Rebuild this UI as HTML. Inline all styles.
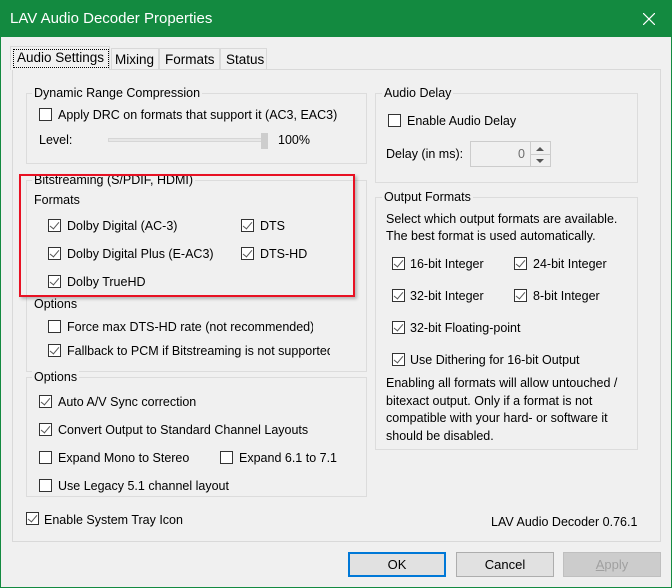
<!DOCTYPE html>
<html><head><meta charset="utf-8"><style>
*{box-sizing:border-box;margin:0;padding:0}
body{width:672px;height:588px;overflow:hidden;background:#f0f0f0;font-family:"Liberation Sans",sans-serif;font-size:12.5px;color:#000;position:relative}
.a{position:absolute;white-space:nowrap}
.win{position:absolute;left:0;top:0;width:672px;height:588px;border:1px solid #138a40}
.title{position:absolute;left:0;top:0;width:672px;height:37px;background:#138a40;color:#fff;font-size:15px}
.grp{position:absolute;border:1px solid #dcdcdc}
.lbl{position:absolute;background:#f0f0f0;padding:0 2px;line-height:14px}
.cb{position:absolute;width:13px;height:13px;border:1px solid #333;background:#fff}
.cb.c::after{content:"";position:absolute;left:3px;top:0px;width:4px;height:8px;border:solid #555;border-width:0 1.3px 1.3px 0;transform:rotate(40deg)}
.t{position:absolute;line-height:14px;white-space:nowrap}
.btn{position:absolute;height:25px;border:1px solid #adadad;background:#e1e1e1;text-align:center;line-height:23px;font-size:13px}
.tab{font-size:13.5px}
</style></head><body>
<div class="win"></div>
<div class="title"><span class="a" style="left:10px;top:10px">LAV Audio Decoder Properties</span>
<svg class="a" style="left:643px;top:13px" width="12" height="12"><path d="M0 0L12 12M12 0L0 12" stroke="#fff" stroke-width="1.2"/></svg></div>

<div class="a" style="left:12px;top:69px;width:649px;height:473px;border:1px solid #d9d9d9;background:#f0f0f0"></div>
<div class="a" style="left:10px;top:46px;width:100px;height:24px;border:1px solid #d9d9d9;border-bottom:none;background:#f0f0f0"></div>
<div class="a" style="left:13px;top:49px;width:96px;height:19px;border:1px dotted #000"></div>
<div class="t tab" style="left:17px;top:51px">Audio Settings</div>
<div class="a" style="left:111px;top:48px;width:48px;height:21px;border:1px solid #d9d9d9;border-bottom:none"></div>
<div class="t tab" style="left:115px;top:53px">Mixing</div>
<div class="a" style="left:159px;top:48px;width:61px;height:21px;border:1px solid #d9d9d9;border-bottom:none"></div>
<div class="t tab" style="left:165px;top:53px">Formats</div>
<div class="a" style="left:220px;top:48px;width:47px;height:21px;border:1px solid #d9d9d9;border-bottom:none"></div>
<div class="t tab" style="left:226px;top:53px">Status</div>

<!-- DRC -->
<div class="grp" style="left:26px;top:93px;width:341px;height:71px"></div>
<div class="lbl" style="left:32px;top:86px">Dynamic Range Compression</div>
<div class="cb" style="left:39px;top:108px"></div><div class="t" style="left:58px;top:108px">Apply DRC on formats that support it (AC3, EAC3)</div>
<div class="t" style="left:39px;top:133px">Level:</div>
<div class="a" style="left:108px;top:138px;width:160px;height:4px;background:#e7e7e7;border:1px solid #d6d6d6"></div>
<div class="a" style="left:261px;top:133px;width:7px;height:16px;background:#cdcdcd"></div>
<div class="t" style="left:278px;top:133px">100%</div>

<!-- Bitstreaming -->
<div class="grp" style="left:26px;top:180px;width:341px;height:192px"></div>
<div class="lbl" style="left:32px;top:173px">Bitstreaming (S/PDIF, HDMI)</div>
<div class="t" style="left:34px;top:193px">Formats</div>
<div class="cb c" style="left:48px;top:219px"></div><div class="t" style="left:67px;top:219px">Dolby Digital (AC-3)</div>
<div class="cb c" style="left:241px;top:219px"></div><div class="t" style="left:260px;top:219px">DTS</div>
<div class="cb c" style="left:48px;top:247px"></div><div class="t" style="left:67px;top:247px">Dolby Digital Plus (E-AC3)</div>
<div class="cb c" style="left:241px;top:247px"></div><div class="t" style="left:260px;top:247px">DTS-HD</div>
<div class="cb c" style="left:48px;top:275px"></div><div class="t" style="left:67px;top:275px">Dolby TrueHD</div>
<div class="a" style="left:19px;top:174px;width:336px;height:123px;border:2px solid #e81123;box-shadow:2px 2px 3px rgba(0,0,0,.25)"></div>
<div class="t" style="left:34px;top:297px">Options</div>
<div class="cb" style="left:48px;top:320px"></div><div class="t" style="left:67px;top:320px;width:246px;overflow:hidden">Force max DTS-HD rate (not recommended)</div>
<div class="cb c" style="left:48px;top:344px"></div><div class="t" style="left:67px;top:344px;width:263px;overflow:hidden">Fallback to PCM if Bitstreaming is not supported</div>

<!-- Options -->
<div class="grp" style="left:26px;top:377px;width:341px;height:120px"></div>
<div class="lbl" style="left:32px;top:370px">Options</div>
<div class="cb c" style="left:39px;top:395px"></div><div class="t" style="left:58px;top:395px">Auto A/V Sync correction</div>
<div class="cb c" style="left:39px;top:423px"></div><div class="t" style="left:58px;top:423px">Convert Output to Standard Channel Layouts</div>
<div class="cb" style="left:39px;top:451px"></div><div class="t" style="left:58px;top:451px">Expand Mono to Stereo</div>
<div class="cb" style="left:220px;top:451px"></div><div class="t" style="left:239px;top:451px">Expand 6.1 to 7.1</div>
<div class="cb" style="left:39px;top:479px"></div><div class="t" style="left:58px;top:479px">Use Legacy 5.1 channel layout</div>

<div class="cb c" style="left:26px;top:512px"></div><div class="t" style="left:44px;top:513px">Enable System Tray Icon</div>
<div class="t" style="left:491px;top:515px">LAV Audio Decoder 0.76.1</div>

<!-- Audio Delay -->
<div class="grp" style="left:375px;top:93px;width:263px;height:90px"></div>
<div class="lbl" style="left:382px;top:86px">Audio Delay</div>
<div class="cb" style="left:388px;top:114px"></div><div class="t" style="left:407px;top:114px">Enable Audio Delay</div>
<div class="t" style="left:386px;top:147px">Delay (in ms):</div>
<div class="a" style="left:470px;top:141px;width:81px;height:26px;border:1px solid #ccc;background:#f0f0f0"></div>
<div class="t" style="left:518px;top:147px;color:#6d6d6d">0</div>
<div class="a" style="left:530px;top:142px;width:20px;height:24px;border-left:1px solid #ccc"></div>
<div class="a" style="left:530px;top:154px;width:20px;height:1px;background:#ccc"></div>
<svg class="a" style="left:535px;top:146px" width="10" height="18"><path d="M1 5L5 1L9 5Z M1 13L9 13L5 17Z" fill="#555"/></svg>

<!-- Output Formats -->
<div class="grp" style="left:375px;top:197px;width:263px;height:253px"></div>
<div class="lbl" style="left:382px;top:190px">Output Formats</div>
<div class="t" style="left:386px;top:211px;line-height:17px">Select which output formats are available.<br>The best format is used automatically.</div>
<div class="cb c" style="left:392px;top:257px"></div><div class="t" style="left:410px;top:257px">16-bit Integer</div>
<div class="cb c" style="left:514px;top:257px"></div><div class="t" style="left:533px;top:257px">24-bit Integer</div>
<div class="cb c" style="left:392px;top:289px"></div><div class="t" style="left:410px;top:289px">32-bit Integer</div>
<div class="cb c" style="left:514px;top:289px"></div><div class="t" style="left:533px;top:289px">8-bit Integer</div>
<div class="cb c" style="left:392px;top:321px"></div><div class="t" style="left:410px;top:321px">32-bit Floating-point</div>
<div class="cb c" style="left:392px;top:353px"></div><div class="t" style="left:410px;top:353px">Use Dithering for 16-bit Output</div>
<div class="t" style="left:386px;top:375px;line-height:17.5px">Enabling all formats will allow untouched /<br>bitexact output. Only if a format is not<br>compatible with your hard- or software it<br>should be disabled.</div>

<div class="btn" style="left:348px;top:552px;width:98px;border:2px solid #0078d7;line-height:21px">OK</div>
<div class="btn" style="left:456px;top:552px;width:98px">Cancel</div>
<div class="btn" style="left:563px;top:552px;width:98px;color:#a0a0a0;background:#cccccc;border-color:#bfbfbf"><u>A</u>pply</div>
</body></html>
